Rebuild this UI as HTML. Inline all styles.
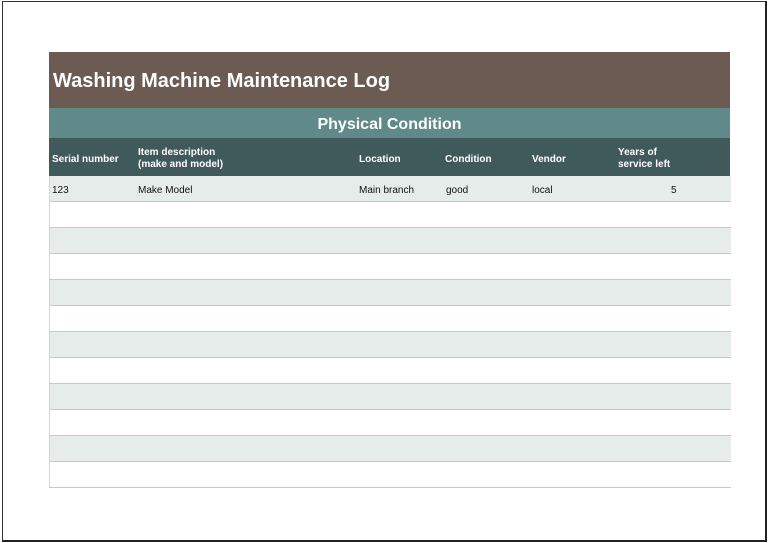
<!DOCTYPE html>
<html><head><style>
body{margin:0;width:768px;height:543px;background:#fff;position:relative;font-family:"Liberation Sans",sans-serif;overflow:hidden}
.frame{position:absolute;left:2px;top:1px;width:762px;height:538px;border:1px solid #333;border-bottom:2px solid #222;border-right:2px solid #222}
.t{position:absolute;left:49px;width:681px}
.title{top:52px;height:56px;background:#6b5b52;color:#fff;font-weight:bold;font-size:20px;line-height:58px;padding-left:4px;box-sizing:border-box}
.sub{top:108px;height:30px;background:#5f8a89;color:#fff;font-weight:bold;font-size:16px;line-height:34px;text-align:center}
.hdr{top:138px;height:38px;background:#40595a;color:#fff;font-weight:bold;font-size:10px}
.hdr span,.row span{position:absolute}
.row{height:25px;border-bottom:1px solid #b4cfcf;font-size:10px;color:#111;border-left:1px solid #c8dada;box-sizing:content-box}
.row.a{background:#e6ecea}
</style></head><body>
<div class="frame"></div>
<div class="t title">Washing Machine Maintenance Log</div>
<div class="t sub">Physical Condition</div>
<div class="t hdr">
<span style="left:3px;top:16px">Serial number</span>
<span style="left:89px;top:9px;line-height:12px">Item description<br>(make and model)</span>
<span style="left:310px;top:16px">Location</span>
<span style="left:396px;top:16px">Condition</span>
<span style="left:483px;top:16px">Vendor</span>
<span style="left:569px;top:9px;line-height:12px">Years of<br>service left</span>
</div>
<div class="t row a" style="top:176px"><span style="left:2px;top:9px">123</span><span style="left:88px;top:9px">Make Model</span><span style="left:309px;top:9px">Main branch</span><span style="left:396px;top:9px">good</span><span style="left:482px;top:9px">local</span><span style="left:621px;top:9px">5</span></div>
<div class="t row" style="top:202px"></div>
<div class="t row a" style="top:228px"></div>
<div class="t row" style="top:254px"></div>
<div class="t row a" style="top:280px"></div>
<div class="t row" style="top:306px"></div>
<div class="t row a" style="top:332px"></div>
<div class="t row" style="top:358px"></div>
<div class="t row a" style="top:384px"></div>
<div class="t row" style="top:410px"></div>
<div class="t row a" style="top:436px"></div>
<div class="t row" style="top:462px"></div>
</body></html>
